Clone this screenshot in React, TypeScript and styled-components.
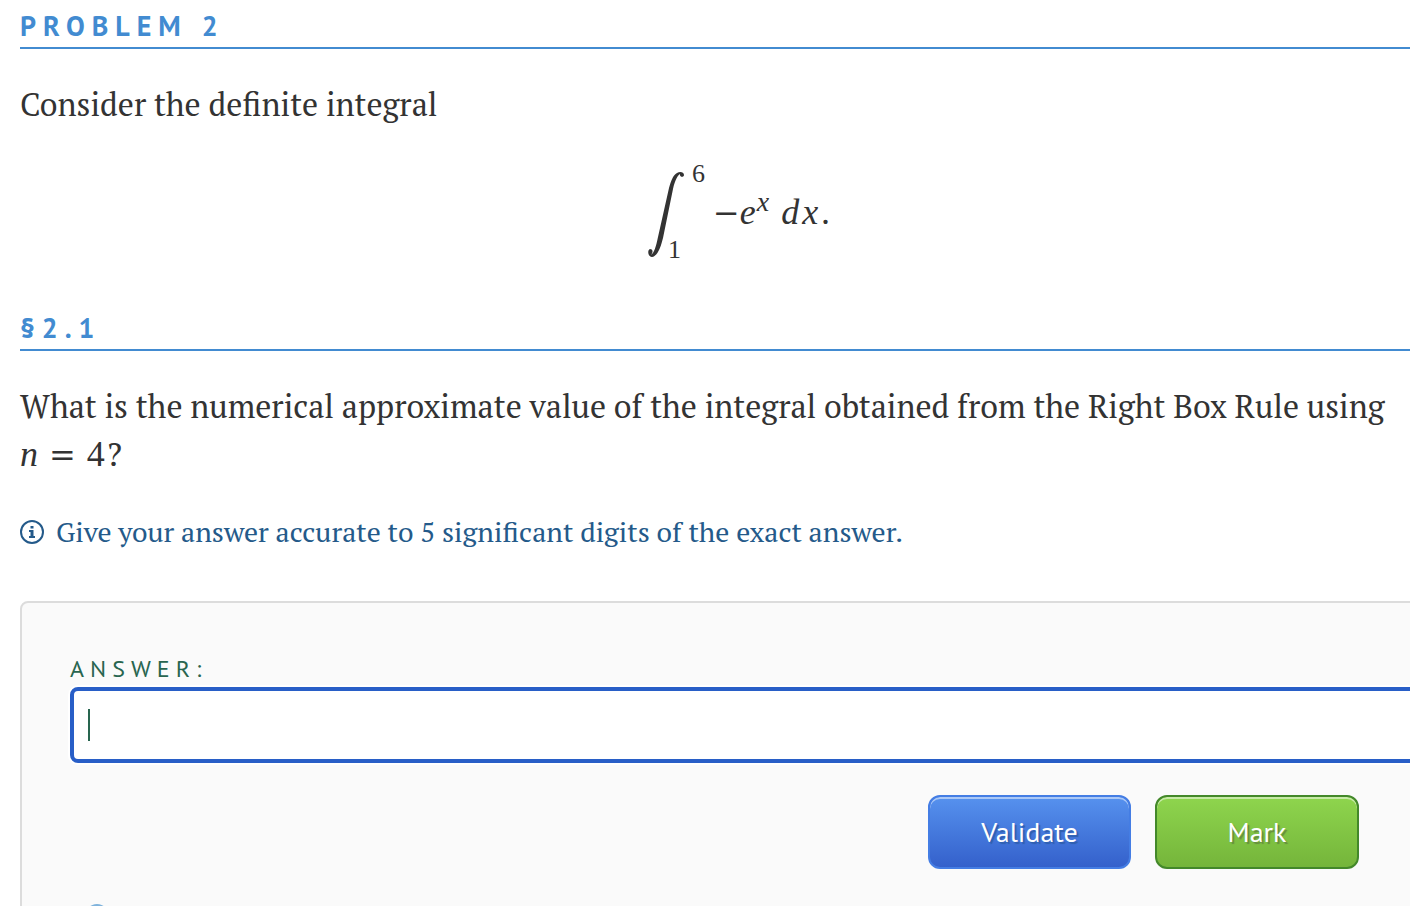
import React from "react";
import styled, { createGlobalStyle } from "styled-components";

const serif = '"PT Serif", "Liberation Serif", serif';
const sans = '"PT Sans", "Open Sans", sans-serif';
const math = '"Liberation Serif", serif';

const GlobalStyle = createGlobalStyle`
  *, *::before, *::after { box-sizing: border-box; }
  html { overflow: hidden; background: #fff; }
  body { margin: 0; color: #333; font-family: ${serif}; }
`;

const Page = styled.main`
  margin-right: -50px;
  padding-left: 20px;
`;

const Heading = styled.h2`
  margin: 0;
  padding: 6px 0 0;
  height: 49px;
  border-bottom: 2px solid #428bd1;
  color: #428bd1;
  font: 700 28px/40px ${sans};
  letter-spacing: 7px;
  text-transform: uppercase;
`;

const Text = styled.p`
  margin: 31px 0 32px;
  font-size: 32px;
  line-height: 48px;
`;

const Formula = styled.div`
  display: flex;
  justify-content: center;
  align-items: center;
  height: 102px;
  padding-top: 2px;
  margin-bottom: 40px;
  font: 36px/48px ${math};
`;

const Integral = styled.svg`
  width: 36px;
  height: 86px;
  margin-top: 4px;
  fill: #333;
`;

const Limits = styled.span`
  display: flex;
  flex-direction: column;
  justify-content: space-between;
  height: 100px;
  margin-left: -16px;
  font-size: 26px;
  line-height: 24px;
`;

const Upper = styled.span`
  padding-left: 24px;
`;

const Var = styled.i`
  font-family: ${math};
  font-size: 36px;
  line-height: 0;
`;

const Num = styled.span`
  margin-right: 2px;
  font-family: ${math};
  font-size: 36px;
  line-height: 0;
`;

const Operator = styled.span`
  font: 32px/0 "DejaVu Serif", serif;
`;

const Relation = styled(Operator)`
  margin: 0 11px;
`;

const Exponent = styled.sup`
  margin: 0 12px 0 1px;
  font: italic 28px/0 ${math};
`;

const Integrand = styled.span`
  margin-left: 8px;
`;

const Differential = styled.span`
  display: inline-flex;
  gap: 3px;
`;

const Hint = styled.p`
  display: flex;
  align-items: center;
  gap: 12px;
  margin: 30px 0 47px;
  color: #245a8a;
  font-size: 28px;
  line-height: 44px;
`;

const HintIcon = styled.svg`
  flex: none;
  width: 24px;
  height: 24px;
`;

const Panel = styled.form`
  padding: 48px 40px 48px 48px;
  border: 2px solid #dcdcdc;
  border-radius: 8px;
  background: #fafafa;
`;

const Label = styled.label`
  display: block;
  color: #28654f;
  font: 24px/36px ${sans};
  letter-spacing: 6px;
  text-transform: uppercase;
`;

const Field = styled.div`
  position: relative;
`;

const AnswerInput = styled.input`
  display: block;
  width: 100%;
  height: 76px;
  padding: 0 14px;
  border: 4px solid #285ec7;
  border-radius: 8px;
  outline: 0;
  background: #fff;
  box-shadow: 0 0 0 2px #fff;
  color: #28654f;
  font: 28px/36px ${sans};
  caret-color: transparent;
`;

const Caret = styled.span`
  position: absolute;
  left: 18px;
  top: 22px;
  width: 2px;
  height: 32px;
  background: #28654f;
`;

const Actions = styled.div`
  display: flex;
  justify-content: flex-end;
  gap: 24px;
  margin: 32px 59px 35px 0;
`;

const Button = styled.button<{ $tone: "blue" | "green" }>`
  width: ${(p) => (p.$tone === "blue" ? "203px" : "204px")};
  height: 74px;
  padding: 0;
  border: 2px solid ${(p) => (p.$tone === "blue" ? "#447de4" : "#43882a")};
  border-radius: 12px;
  background: ${(p) =>
    p.$tone === "blue"
      ? "linear-gradient(#5793ef, #335fca)"
      : "linear-gradient(#8fd64e, #74b43a)"};
  background-origin: border-box;
  box-shadow: inset 0 2px 0 rgba(255, 255, 255, 0.5);
  color: #fff;
  font: 28px/36px ${sans};
  text-shadow: 2px 2px 1px ${(p) => (p.$tone === "blue" ? "#2f5fae" : "#658d3d")};
`;

const Help = styled.svg`
  display: block;
  width: 24px;
  height: 24px;
  margin-left: 15px;
`;

export default function App() {
  return (
    <>
      <GlobalStyle />
      <Page>
        <Heading>Problem 2</Heading>
        <Text>Consider the definite integral</Text>
        <Formula>
          <Integral viewBox="0 0 36 86" aria-label="integral">
            <path d="M36 4C36 1 32 0 29 2C25 4 23 10 21 17L10 66C8 76 6 82 3 84C6 80 4 78 2 78C-1 79 0 86 4 86C10 85 13 75 15 67L25 18C27 9 30 4 32 3C31 6 36 7 36 4Z" />
          </Integral>
          <Limits>
            <Upper>6</Upper>
            <span>1</span>
          </Limits>
          <Integrand>
            <Operator>−</Operator>
            <Var>e</Var>
            <Exponent>x</Exponent>
            <Differential>
              <Var>d</Var>
              <Var>x</Var>
              <Num>.</Num>
            </Differential>
          </Integrand>
        </Formula>
        <Heading>§2.1</Heading>
        <Text>
          What is the numerical approximate value of the integral obtained from the Right Box Rule using{" "}
          <Var>n</Var>
          <Relation>=</Relation>
          <Num>4</Num>?
        </Text>
        <Hint>
          <HintIcon viewBox="0 0 24 24" aria-hidden="true">
            <circle cx="12" cy="12" r="11" fill="none" stroke="#245a8a" strokeWidth="2" />
            <path d="M10.5 6h3v2.5h-3zM9 10h4.5v6H15v2H9v-2h1.5v-4H9z" fill="#245a8a" />
          </HintIcon>
          Give your answer accurate to 5 significant digits of the exact answer.
        </Hint>
        <Panel onSubmit={(e) => e.preventDefault()}>
          <Label htmlFor="answer">Answer:</Label>
          <Field>
            <AnswerInput id="answer" type="text" autoComplete="off" />
            <Caret />
          </Field>
          <Actions>
            <Button type="button" $tone="blue">Validate</Button>
            <Button type="submit" $tone="green">Mark</Button>
          </Actions>
          <Help viewBox="0 0 24 24" aria-hidden="true">
            <circle cx="12" cy="12" r="11" fill="none" stroke="#7fb3dc" strokeWidth="2" />
          </Help>
        </Panel>
      </Page>
    </>
  );
}
